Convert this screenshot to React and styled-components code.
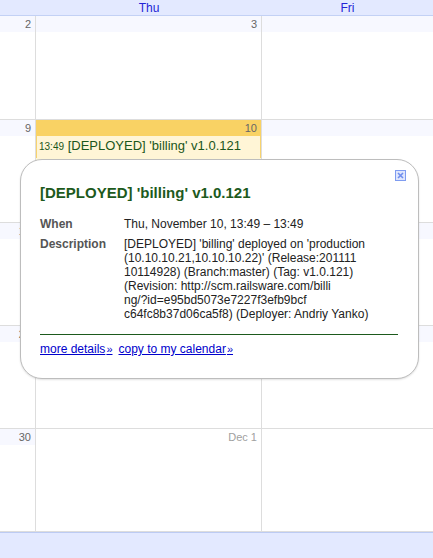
import React from 'react';
import styled, { createGlobalStyle } from 'styled-components';

const GlobalStyle = createGlobalStyle`
  html, body {
    margin: 0;
    padding: 0;
    background: #fff;
  }
  body {
    font-family: "Liberation Sans", Arial, sans-serif;
    font-size: 12px;
  }
`;

const weeks = [
  { week: '2', thu: '3', height: 104 },
  { week: '9', thu: '10', today: true, height: 103 },
  { week: '16', thu: '17', height: 103 },
  { week: '23', thu: '24', height: 103 },
  { week: '30', thu: 'Dec 1', otherMonth: true, height: 103 },
];

const descriptionLines = [
  "[DEPLOYED] 'billing' deployed on 'production",
  "(10.10.10.21,10.10.10.22)' (Release:201111",
  '10114928) (Branch:master) (Tag: v1.0.121)',
  '(Revision: http://scm.railsware.com/billi',
  'ng/?id=e95bd5073e7227f3efb9bcf',
  'c64fc8b37d06ca5f8) (Deployer: Andriy Yanko)',
];

const App = () => {
  return (
    <Page>
      <GlobalStyle />
      <Header>
        <HeadCell />
        <HeadCell>Thu</HeadCell>
        <HeadCell>Fri</HeadCell>
      </Header>
      <Weeks>
        {weeks.map((w) => (
          <Week key={w.week} style={{ height: w.height }}>
            <Cell>
              <DayBand>{w.week}</DayBand>
            </Cell>
            <Cell today={w.today}>
              <DayBand today={w.today} muted={w.otherMonth}>
                {w.thu}
              </DayBand>
              {w.today && (
                <EventChip>
                  <EventTime>13:49</EventTime> [DEPLOYED] 'billing' v1.0.121
                </EventChip>
              )}
            </Cell>
            <Cell last>
              <DayBand muted={w.otherMonth} />
            </Cell>
          </Week>
        ))}
      </Weeks>
      <Footer />

      <Bubble>
        <CloseBox aria-label="close">
          <svg width="11" height="11" viewBox="0 0 11 11">
            <rect x="0.5" y="0.5" width="10" height="10" fill="#dfe6fd" stroke="#7f9cf0" />
            <path d="M3 3 L8 8 M8 3 L3 8" stroke="#6f8eee" strokeWidth="1.6" />
          </svg>
        </CloseBox>
        <Title>[DEPLOYED] 'billing' v1.0.121</Title>
        <Details>
          <Label>When</Label>
          <Value>Thu, November 10, 13:49 – 13:49</Value>
          <Label>Description</Label>
          <Value>
            {descriptionLines.map((line) => (
              <Line key={line}>{line}</Line>
            ))}
          </Value>
        </Details>
        <Divider />
        <Links>
          <Link href="#">more details<Raquo>»</Raquo></Link>
          <Link href="#">copy to my calendar<Raquo>»</Raquo></Link>
        </Links>
      </Bubble>
    </Page>
  );
};

export default App;

const Page = styled.div`
  position: relative;
  width: 433px;
  height: 558px;
  overflow: hidden;
  display: flex;
  flex-direction: column;
  background: #fff;
`;

const Header = styled.div`
  display: grid;
  grid-template-columns: 36px 226px 1fr;
  height: 16px;
  background: #e3e9ff;
  border-bottom: 1px solid #c3d1f5;
  box-sizing: border-box;
`;

const HeadCell = styled.div`
  text-align: center;
  color: #2323d6;
  font-size: 12px;
  line-height: 16px;
`;

const Weeks = styled.div`
  display: flex;
  flex-direction: column;
`;

const Week = styled.div`
  display: grid;
  grid-template-columns: 36px 226px 1fr;
  border-bottom: 1px solid #dddddd;
  box-sizing: border-box;
`;

const Cell = styled.div`
  display: flex;
  flex-direction: column;
  border-right: ${({ last }) => (last ? 'none' : '1px solid #dddddd')};
  background: ${({ today }) => (today ? '#fff7d7' : '#fff')};
`;

const DayBand = styled.div`
  height: 16px;
  padding: 1px 4px 0 0;
  box-sizing: border-box;
  text-align: right;
  font-size: 11px;
  line-height: 14px;
  color: ${({ muted }) => (muted ? '#a0a0a0' : '#666')};
  background: ${({ today, muted }) => (today ? '#f9d264' : muted ? '#fff' : '#f7f8ff')};
`;

const EventChip = styled.div`
  height: 22px;
  padding: 0 0 0 2px;
  box-sizing: border-box;
  background: #fff5d6;
  border-left: 1px solid #f7d36e;
  border-right: 1px solid #f7d36e;
  color: #1b561b;
  font-size: 13px;
  line-height: 20px;
  white-space: nowrap;
`;

const EventTime = styled.span`
  font-size: 10px;
`;

const Footer = styled.div`
  flex: 1;
  background: #e3e9ff;
  border-top: 1px solid #bccbf3;
`;

const Bubble = styled.div`
  position: absolute;
  left: 20px;
  top: 159px;
  width: 399px;
  height: 220px;
  box-sizing: border-box;
  padding: 24px 20px 0 19px;
  background: #fff;
  border: 1px solid #bdbdbd;
  border-radius: 22px;
  box-shadow: 0 1px 2px rgba(0, 0, 0, 0.12);
`;

const CloseBox = styled.div`
  position: absolute;
  top: 10px;
  right: 12px;
  width: 11px;
  height: 11px;
  display: flex;
`;

const Title = styled.div`
  font-size: 15px;
  font-weight: bold;
  line-height: 17px;
  color: #1d5a1d;
  margin-bottom: 16px;
`;

const Details = styled.div`
  display: grid;
  grid-template-columns: 84px 1fr;
  row-gap: 6px;
  color: #222;
  font-size: 12px;
  line-height: 14px;
`;

const Label = styled.div`
  font-weight: bold;
  color: #555;
`;

const Value = styled.div`
  display: flex;
  flex-direction: column;
`;

const Line = styled.span`
  white-space: nowrap;
`;

const Divider = styled.div`
  height: 1px;
  margin-top: 13px;
  background: #1d5a1d;
`;

const Links = styled.div`
  display: flex;
  gap: 6px;
  margin-top: 7px;
  font-size: 12px;
  line-height: 14px;
`;

const Link = styled.a`
  color: #0000cc;
  text-decoration: underline;
`;

const Raquo = styled.span`
  font-size: 11px;
  padding-left: 1px;
`;
